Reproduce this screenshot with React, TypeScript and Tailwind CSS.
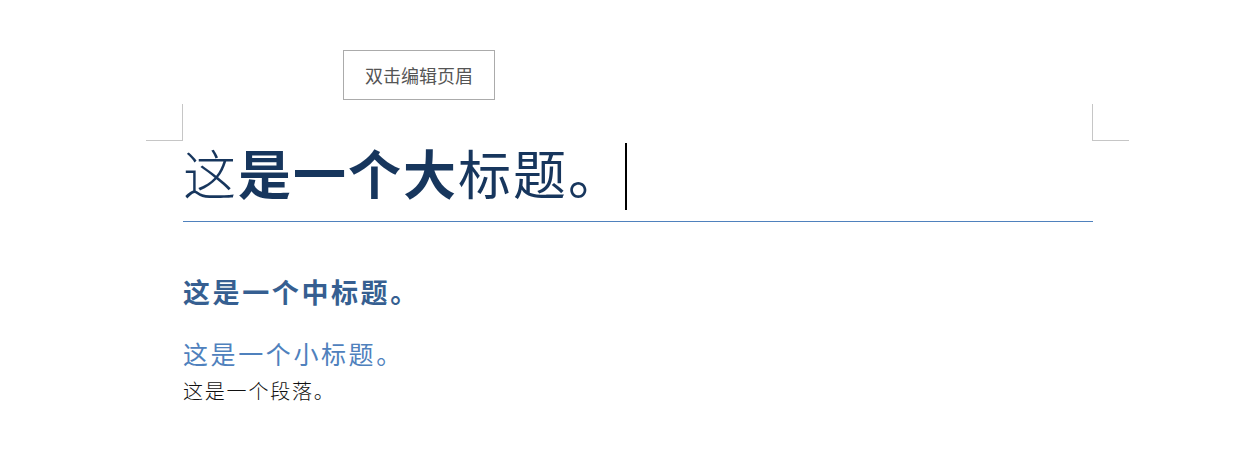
import React from 'react';

const cjk = { fontFamily: '"Noto Sans CJK SC", "Noto Sans", sans-serif' };

export default function App() {
  return (
    <div className="w-[1238px] h-[475px] bg-white overflow-hidden" style={cjk}>
      {/* header hint */}
      <div className="pt-[50px] pl-[343px]">
        <div className="w-[152px] h-[50px] border border-[#ababab] flex items-center justify-center text-[18px] text-[#555555] leading-none">
          双击编辑页眉
        </div>
      </div>

      {/* page corner marks */}
      <div className="flex mt-[4px]">
        <div className="ml-[146px] w-[37px] h-[37px] border-r border-b border-[#c6c6c6]" />
        <div className="ml-[909px] w-[37px] h-[37px] border-l border-b border-[#c6c6c6]" />
      </div>

      {/* body */}
      <div className="ml-[183px] w-[910px]">
        <div className="flex items-start h-[80px]">
          <h1 className="mt-[1px] text-[53px] leading-[60px] tracking-[2px] text-[#17365d] font-normal whitespace-nowrap">
            <span className="font-light">这</span>
            <span className="font-semibold">是一个大</span>
            <span>标题。</span>
          </h1>
          <span className="ml-[2px] mt-[2px] w-[2px] h-[67px] bg-black" />
        </div>
        <div className="h-[1px] bg-[#4f81bd]" />

        <h2 className="mt-[54px] text-[27px] leading-[32px] tracking-[2.6px] font-bold text-[#365f91] whitespace-nowrap">
          这是一个中标题。
        </h2>

        <h3 className="mt-[30px] text-[25px] leading-[30px] tracking-[2.6px] font-normal text-[#4f81bd] whitespace-nowrap">
          这是一个小标题。
        </h3>

        <p className="mt-[11px] text-[20px] leading-[24px] tracking-[1.8px] font-light text-[#111111] whitespace-nowrap">
          这是一个段落。
        </p>
      </div>
    </div>
  );
}
